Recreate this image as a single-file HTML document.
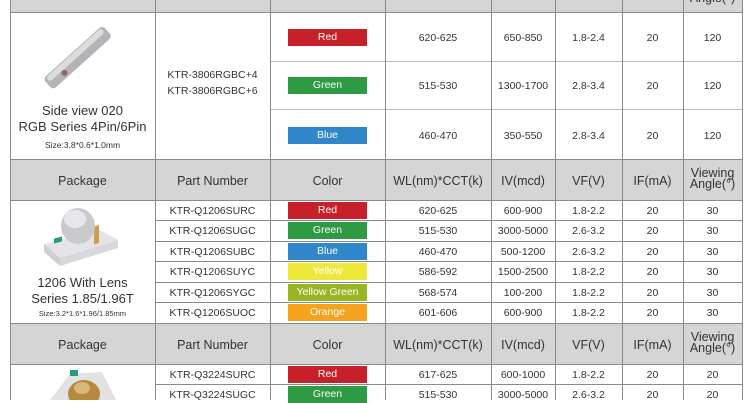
<!DOCTYPE html>
<html><head><meta charset="utf-8"><style>
*{margin:0;padding:0;box-sizing:border-box}
body{width:750px;height:400px;overflow:hidden;background:#fff;font-family:"Liberation Sans",sans-serif;color:#333;position:relative}
.a{position:absolute}
.g{background:#d5d5d5}
.h{position:absolute;background:#8a8a8a;height:1px}
.v{position:absolute;background:#8a8a8a;width:1px}
.t{position:absolute;text-align:center;font-size:10.5px;line-height:12px;white-space:nowrap;margin-top:1px}
.hd{font-size:12.5px}
.bar{position:absolute;left:288px;width:79px;color:#fff;font-size:10.5px;text-align:center;height:17px;line-height:17px}
</style></head><body>
<div class="a g" style="left:10px;top:0;width:733px;height:12px"></div>
<div class="a g" style="left:10px;top:159px;width:733px;height:41px"></div>
<div class="a g" style="left:10px;top:323px;width:733px;height:41px"></div>

<div class="h" style="left:10px;width:733px;top:12px"></div>
<div class="h" style="left:270px;width:473px;top:61px;background:#bbb"></div>
<div class="h" style="left:270px;width:473px;top:109px;background:#bbb"></div>
<div class="h" style="left:10px;width:733px;top:159px"></div>
<div class="h" style="left:10px;width:733px;top:200px"></div>
<div class="h" style="left:155px;width:588px;top:220px"></div>
<div class="h" style="left:155px;width:588px;top:241px"></div>
<div class="h" style="left:155px;width:588px;top:261px"></div>
<div class="h" style="left:155px;width:588px;top:282px"></div>
<div class="h" style="left:155px;width:588px;top:302px"></div>
<div class="h" style="left:10px;width:733px;top:323px"></div>
<div class="h" style="left:10px;width:733px;top:364px"></div>
<div class="h" style="left:155px;width:588px;top:384px"></div>
<div class="v" style="left:10px;top:0;height:400px"></div>
<div class="v" style="left:155px;top:0;height:400px"></div>
<div class="v" style="left:270px;top:0;height:400px"></div>
<div class="v" style="left:385px;top:0;height:400px"></div>
<div class="v" style="left:491px;top:0;height:400px"></div>
<div class="v" style="left:555px;top:0;height:400px"></div>
<div class="v" style="left:622px;top:0;height:400px"></div>
<div class="v" style="left:683px;top:0;height:400px"></div>
<div class="v" style="left:742px;top:0;height:400px"></div>

<div class="t hd" style="left:683px;width:59px;top:-8px;line-height:11px">Angle(°)</div>

<svg class="a" style="left:38px;top:18px" width="80" height="80" viewBox="0 0 80 80">
<g transform="rotate(-42 40 40)"><rect x="0" y="32" width="80" height="15" rx="4" fill="#b4b4b8"/><rect x="3" y="33" width="74" height="6" rx="3" fill="#dcdcdf"/><circle cx="20" cy="42" r="3" fill="#8b6a5a"/></g></svg>
<div class="t" style="left:10px;width:145px;top:102px;font-size:13px;line-height:16px">Side view 020<br>RGB Series 4Pin/6Pin</div>
<div class="t" style="left:10px;width:145px;top:138px;font-size:8.5px">Size:3.8*0.6*1.0mm</div>
<div class="t" style="left:155px;width:115px;top:66px;line-height:16px">KTR-3806RGBC+4<br>KTR-3806RGBC+6</div>
<div class="bar" style="top:29px;background:#c8202a">Red</div>
<div class="bar" style="top:77px;background:#2f9a44">Green</div>
<div class="bar" style="top:127px;background:#2f86c8">Blue</div>
<div class="t" style="left:385px;width:106px;top:31px">620-625</div><div class="t" style="left:491px;width:64px;top:31px">650-850</div><div class="t" style="left:555px;width:67px;top:31px">1.8-2.4</div><div class="t" style="left:622px;width:61px;top:31px">20</div><div class="t" style="left:683px;width:59px;top:31px">120</div>
<div class="t" style="left:385px;width:106px;top:79px">515-530</div><div class="t" style="left:491px;width:64px;top:79px">1300-1700</div><div class="t" style="left:555px;width:67px;top:79px">2.8-3.4</div><div class="t" style="left:622px;width:61px;top:79px">20</div><div class="t" style="left:683px;width:59px;top:79px">120</div>
<div class="t" style="left:385px;width:106px;top:129px">460-470</div><div class="t" style="left:491px;width:64px;top:129px">350-550</div><div class="t" style="left:555px;width:67px;top:129px">2.8-3.4</div><div class="t" style="left:622px;width:61px;top:129px">20</div><div class="t" style="left:683px;width:59px;top:129px">120</div>

<div class="t hd" style="left:10px;width:145px;top:174px">Package</div>
<div class="t hd" style="left:155px;width:115px;top:174px">Part Number</div>
<div class="t hd" style="left:270px;width:115px;top:174px">Color</div>
<div class="t hd" style="left:385px;width:106px;top:174px">WL(nm)*CCT(k)</div>
<div class="t hd" style="left:491px;width:64px;top:174px">IV(mcd)</div>
<div class="t hd" style="left:555px;width:67px;top:174px">VF(V)</div>
<div class="t hd" style="left:622px;width:61px;top:174px">IF(mA)</div>
<div class="t hd" style="left:683px;width:59px;top:167px;line-height:11px">Viewing<br>Angle(°)</div>

<svg class="a" style="left:40px;top:204px" width="80" height="64" viewBox="0 0 80 64">
<polygon points="4,40 60,26 78,36 20,54" fill="#e4e4e6"/><polygon points="4,40 20,54 20,62 4,48" fill="#cfcfd2"/><polygon points="20,54 78,36 78,44 20,62" fill="#d8d8da"/>
<rect x="14" y="38" width="8" height="5" fill="#2a9d78" transform="skewY(-14)"/>
<rect x="54" y="40" width="5" height="18" fill="#c8a04a" transform="skewY(-18)"/>
<ellipse cx="38" cy="22" rx="17" ry="18" fill="#c9cacd"/><ellipse cx="35" cy="15" rx="11" ry="9" fill="#e7e7ea"/></svg>
<div class="t" style="left:10px;width:145px;top:274px;font-size:13px;line-height:16px">1206 With Lens<br>Series 1.85/1.96T</div>
<div class="t" style="left:10px;width:145px;top:307px;font-size:7.5px">Size:3.2*1.6*1.96/1.85mm</div>

<div class="t" style="left:155px;width:115px;top:204px">KTR-Q1206SURC</div>
<div class="t" style="left:155px;width:115px;top:224px">KTR-Q1206SUGC</div>
<div class="t" style="left:155px;width:115px;top:245px">KTR-Q1206SUBC</div>
<div class="t" style="left:155px;width:115px;top:265px">KTR-Q1206SUYC</div>
<div class="t" style="left:155px;width:115px;top:286px">KTR-Q1206SYGC</div>
<div class="t" style="left:155px;width:115px;top:306px">KTR-Q1206SUOC</div>
<div class="bar" style="top:202px;background:#c8202a">Red</div>
<div class="bar" style="top:222px;background:#2f9a44">Green</div>
<div class="bar" style="top:243px;background:#2f86c8">Blue</div>
<div class="bar" style="top:263px;background:#eee83a">Yellow</div>
<div class="bar" style="top:284px;background:#9ab523">Yellow Green</div>
<div class="bar" style="top:304px;background:#f5a21e">Orange</div>

<div class="t" style="left:385px;width:106px;top:204px">620-625</div><div class="t" style="left:491px;width:64px;top:204px">600-900</div><div class="t" style="left:555px;width:67px;top:204px">1.8-2.2</div><div class="t" style="left:622px;width:61px;top:204px">20</div><div class="t" style="left:683px;width:59px;top:204px">30</div>
<div class="t" style="left:385px;width:106px;top:224px">515-530</div><div class="t" style="left:491px;width:64px;top:224px">3000-5000</div><div class="t" style="left:555px;width:67px;top:224px">2.6-3.2</div><div class="t" style="left:622px;width:61px;top:224px">20</div><div class="t" style="left:683px;width:59px;top:224px">30</div>
<div class="t" style="left:385px;width:106px;top:245px">460-470</div><div class="t" style="left:491px;width:64px;top:245px">500-1200</div><div class="t" style="left:555px;width:67px;top:245px">2.6-3.2</div><div class="t" style="left:622px;width:61px;top:245px">20</div><div class="t" style="left:683px;width:59px;top:245px">30</div>
<div class="t" style="left:385px;width:106px;top:265px">586-592</div><div class="t" style="left:491px;width:64px;top:265px">1500-2500</div><div class="t" style="left:555px;width:67px;top:265px">1.8-2.2</div><div class="t" style="left:622px;width:61px;top:265px">20</div><div class="t" style="left:683px;width:59px;top:265px">30</div>
<div class="t" style="left:385px;width:106px;top:286px">568-574</div><div class="t" style="left:491px;width:64px;top:286px">100-200</div><div class="t" style="left:555px;width:67px;top:286px">1.8-2.2</div><div class="t" style="left:622px;width:61px;top:286px">20</div><div class="t" style="left:683px;width:59px;top:286px">30</div>
<div class="t" style="left:385px;width:106px;top:306px">601-606</div><div class="t" style="left:491px;width:64px;top:306px">600-900</div><div class="t" style="left:555px;width:67px;top:306px">1.8-2.2</div><div class="t" style="left:622px;width:61px;top:306px">20</div><div class="t" style="left:683px;width:59px;top:306px">30</div>

<div class="t hd" style="left:10px;width:145px;top:338px">Package</div>
<div class="t hd" style="left:155px;width:115px;top:338px">Part Number</div>
<div class="t hd" style="left:270px;width:115px;top:338px">Color</div>
<div class="t hd" style="left:385px;width:106px;top:338px">WL(nm)*CCT(k)</div>
<div class="t hd" style="left:491px;width:64px;top:338px">IV(mcd)</div>
<div class="t hd" style="left:555px;width:67px;top:338px">VF(V)</div>
<div class="t hd" style="left:622px;width:61px;top:338px">IF(mA)</div>
<div class="t hd" style="left:683px;width:59px;top:331px;line-height:11px">Viewing<br>Angle(°)</div>

<svg class="a" style="left:40px;top:368px" width="80" height="32" viewBox="0 0 80 32">
<polygon points="10,32 30,6 62,4 76,32" fill="#e2e2e4"/><rect x="30" y="2" width="8" height="6" fill="#2a9d78"/><ellipse cx="44" cy="26" rx="16" ry="14" fill="#b58a3e"/><ellipse cx="42" cy="20" rx="8" ry="6" fill="#d8b77a"/></svg>
<div class="t" style="left:155px;width:115px;top:368px">KTR-Q3224SURC</div>
<div class="t" style="left:155px;width:115px;top:388px">KTR-Q3224SUGC</div>
<div class="bar" style="top:366px;background:#c8202a">Red</div>
<div class="bar" style="top:386px;background:#2f9a44">Green</div>
<div class="t" style="left:385px;width:106px;top:368px">617-625</div><div class="t" style="left:491px;width:64px;top:368px">600-1000</div><div class="t" style="left:555px;width:67px;top:368px">1.8-2.2</div><div class="t" style="left:622px;width:61px;top:368px">20</div><div class="t" style="left:683px;width:59px;top:368px">20</div>
<div class="t" style="left:385px;width:106px;top:388px">515-530</div><div class="t" style="left:491px;width:64px;top:388px">3000-5000</div><div class="t" style="left:555px;width:67px;top:388px">2.6-3.2</div><div class="t" style="left:622px;width:61px;top:388px">20</div><div class="t" style="left:683px;width:59px;top:388px">20</div>
</body></html>
